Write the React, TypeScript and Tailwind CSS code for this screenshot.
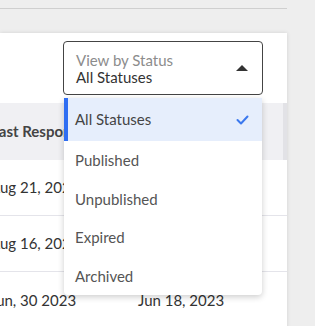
import React from 'react';

const statuses = ['All Statuses', 'Published', 'Unpublished', 'Expired', 'Archived'];

const rows = [
  { first: 'Aug 21, 2023', last: '' },
  { first: 'Aug 16, 2023', last: '' },
  { first: 'Jun, 30 2023', last: 'Jun 18, 2023' },
];

export default function App() {
  return (
    <div className="relative w-[315px] h-[326px] overflow-hidden bg-[#eeeeee] font-['Lato',sans-serif]">
      <div className="h-2" />
      <div className="h-px w-[287px] bg-[#cfcfcf]" />

      {/* Card */}
      <div className="mt-6 w-[287px] h-[300px] bg-white shadow-[0_0_4px_rgba(0,0,0,0.12)]">
        <div className="flex justify-end pt-2 pr-[24px] h-[70px]">
          <div className="flex items-center w-[200px] h-[54px] rounded border border-[#444] pl-3 pr-[14px]">
            <div className="flex-1 leading-[17px] pt-px">
              <div className="text-[15px] text-[#8c8c8c]">View by Status</div>
              <div className="text-[15px] text-[#333]">All Statuses</div>
            </div>
            <div className="w-0 h-0 border-l-[6px] border-r-[6px] border-b-[6px] border-l-transparent border-r-transparent border-b-[#333]" />
          </div>
        </div>

        {/* Table */}
        <div className="h-[57px] bg-[#f0f0f3] flex items-center border-r-4 border-[#e2e2e6]">
          <span className="-ml-[9px] text-[15px] font-bold text-[#444]">Last Response</span>
        </div>
        {rows.map((r, i) => (
          <div
            key={i}
            className={`flex items-center h-[56px] text-[15px] text-[#333] ${i < rows.length - 1 ? 'border-b border-[#e4e4ea]' : ''}`}
          >
            <span className="-ml-[10px] w-[148px]">{r.first}</span>
            <span>{r.last}</span>
          </div>
        ))}
      </div>

      {/* Dropdown menu */}
      <div className="absolute left-[64px] top-[98px] w-[198px] bg-white rounded-b shadow-[0_2px_6px_rgba(0,0,0,0.2)] overflow-hidden">
        {statuses.map((s, i) => (
          <div
            key={s}
            className={
              i === 0
                ? 'relative flex items-center h-[43px] pl-[11px] pr-3 bg-[#e6eefc] text-[15px] text-[#444]'
                : 'flex items-center h-[38.5px] pl-[11px] text-[15px] text-[#555]'
            }
          >
            {i === 0 && <div className="absolute left-0 top-0 bottom-0 w-1 bg-[#2f6ef2]" />}
            <span className="flex-1">{s}</span>
            {i === 0 && (
              <svg width="13" height="10" viewBox="0 0 13 10" className="mr-px">
                <path d="M1.5 5 L5 8.5 L11.5 1.5" fill="none" stroke="#3b78ee" strokeWidth="2" strokeLinecap="round" strokeLinejoin="round" />
              </svg>
            )}
          </div>
        ))}
      </div>
    </div>
  );
}
